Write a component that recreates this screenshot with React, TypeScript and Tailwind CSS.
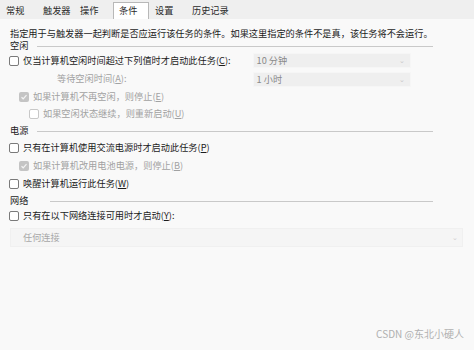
import React from "react";

const font = { fontFamily: '"Noto Sans CJK SC", "Microsoft YaHei", sans-serif' };

function Box({ checked = false, disabled = false }: { checked?: boolean; disabled?: boolean }) {
  if (checked) {
    return (
      <span className="w-[10px] h-[10px] rounded-[2px] bg-[#c4c4c4] flex items-center justify-center shrink-0">
        <svg width="8" height="8" viewBox="0 0 8 8">
          <path d="M1.5 4.2 L3.2 5.8 L6.5 2.2" stroke="#f4f4f4" strokeWidth="1.2" fill="none" />
        </svg>
      </span>
    );
  }
  return (
    <span
      className={`w-[10px] h-[10px] rounded-[2px] border shrink-0 bg-white ${
        disabled ? "border-[#c8c8c8]" : "border-[#7a7a7a]"
      }`}
    />
  );
}

function Row({
  indent,
  checked,
  disabled,
  children,
  h = "h-[18px]",
}: {
  indent: string;
  checked?: boolean;
  disabled?: boolean;
  children: React.ReactNode;
  h?: string;
}) {
  return (
    <div className={`flex items-center ${h} ${indent}`}>
      <Box checked={checked} disabled={disabled} />
      <span className={`ml-[4px] ${disabled ? "text-[#a2a2a2]" : "text-[#1c1c1c]"}`}>{children}</span>
    </div>
  );
}

function Section({ title, lineStart }: { title: string; lineStart: string }) {
  return (
    <div className="flex items-center h-[16px] pl-[10px] pr-[41px]">
      <span className="text-[#1c1c1c]">{title}</span>
      <div className={`flex-1 h-px bg-[#c9c9c9] ${lineStart}`} />
    </div>
  );
}

function Select({ text, w, h }: { text: string; w: string; h: string }) {
  return (
    <div className={`${w} ${h} bg-[#efefef] border border-[#f6f6f6] flex items-center justify-between px-[3px] text-[#8a8a8a]`}>
      <span>{text}</span>
      <span className="text-[7px] text-[#c8c8c8] mr-[2px]">⌄</span>
    </div>
  );
}

export default function App() {
  return (
    <div className="w-[474px] h-[350px] bg-[#f9f9f9] text-[9.2px] leading-none relative overflow-hidden" style={font}>
      {/* tab bar */}
      <div className="h-[19px] bg-[#efefef] flex items-end pl-[6px] text-[#2a2a2a]">
        <span className="h-[17px] flex items-center w-[37px]">常规</span>
        <span className="h-[17px] flex items-center w-[37px]">触发器</span>
        <span className="h-[17px] flex items-center w-[33px]">操作</span>
        <span className="h-[17px] flex items-center w-[36px] bg-white border border-[#b8b8b8] border-b-0 pl-[5px] mr-[6px]">条件</span>
        <span className="h-[17px] flex items-center w-[37px]">设置</span>
        <span className="h-[17px] flex items-center">历史记录</span>
      </div>
      <div className="pt-[9px]">
        <div className="h-[11px] flex items-center pl-[10px] text-[#1c1c1c]">
          指定用于与触发器一起判断是否应运行该任务的条件。如果这里指定的条件不是真，该任务将不会运行。
        </div>
        <div className="mt-[-1px]">
          <Section title="空闲" lineStart="ml-[9px]" />
        </div>
        <div className="flex items-start">
          <div className="flex flex-col">
            <Row indent="pl-[9px]" h="h-[14px]">仅当计算机空闲时间超过下列值时才启动此任务(<u>C</u>):</Row>
            <div className="h-[21px] flex items-center pl-[57px] text-[#a2a2a2]">等待空闲时间(<u>A</u>):</div>
          </div>
          <div className="flex flex-col ml-[22px] mt-[-1px] gap-[4px]">
            <Select text="10 分钟" w="w-[158px]" h="h-[15px]" />
            <Select text="1 小时" w="w-[158px]" h="h-[15px]" />
          </div>
        </div>
        <Row indent="pl-[19px]" h="h-[16px]" checked disabled>如果计算机不再空闲，则停止(<u>E</u>)</Row>
        <Row indent="pl-[29px]" disabled>如果空闲状态继续，则重新启动(<u>U</u>)</Row>
        <Section title="电源" lineStart="ml-[9px]" />
        <Row indent="pl-[9px]">只有在计算机使用交流电源时才启动此任务(<u>P</u>)</Row>
        <Row indent="pl-[19px]" checked disabled>如果计算机改用电池电源，则停止(<u>B</u>)</Row>
        <Row indent="pl-[9px]">唤醒计算机运行此任务(<u>W</u>)</Row>
        <Section title="网络" lineStart="ml-[22px]" />
        <Row indent="pl-[9px]" h="h-[14px]">只有在以下网络连接可用时才启动(<u>Y</u>):</Row>
        <div className="pl-[10px] mt-[5px]">
          <div className="w-[453px] h-[19px] bg-[#f5f5f5] border border-[#f0f0f0] flex items-center justify-between pl-[12px] pr-[4px] text-[#a8a8a8]">
            <span>任何连接</span>
            <span className="text-[7px] text-[#cfcfcf]">⌄</span>
          </div>
        </div>
      </div>
      <div className="absolute right-[10px] bottom-[11px] text-[10px] text-[#b0b0b0]">CSDN @东北小硬人</div>
    </div>
  );
}
